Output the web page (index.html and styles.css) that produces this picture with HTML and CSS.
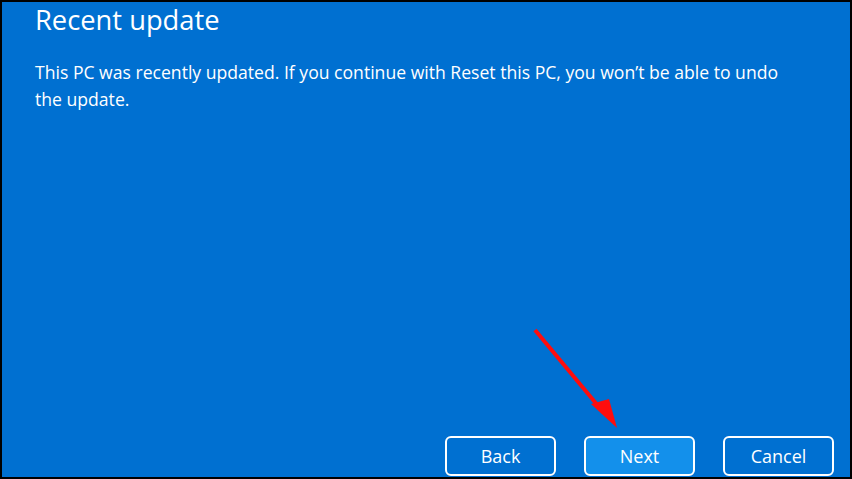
FILE: index.html
```html
<!DOCTYPE html>
<html>
<head>
<meta charset="utf-8">
<link rel="stylesheet" href="styles.css">
</head>
<body>
<div class="screen">
  <div class="content">
    <h1 class="title">Recent update</h1>
    <p class="desc">This PC was recently updated. If you continue with Reset this PC, you won’t be able to undo the update.</p>
  </div>
  <div class="actions">
    <button class="btn">Back</button>
    <button class="btn primary">Next</button>
    <button class="btn">Cancel</button>
  </div>
  <svg class="arrow" width="852" height="479" viewBox="0 0 852 479">
    <line x1="535" y1="330" x2="604" y2="413" stroke="#ff0d0d" stroke-width="4"/>
    <polygon points="617,428 591,404 609,399" fill="#ff0d0d"/>
  </svg>
</div>
</body>
</html>
```
FILE: styles.css
```css
html, body {
  margin: 0;
  padding: 0;
  background: #000;
}
.screen {
  position: relative;
  width: 848px;
  height: 475px;
  margin: 2px 2px 2px 2px;
  background: #0070d1;
  display: flex;
  flex-direction: column;
  justify-content: space-between;
  font-family: "Open Sans", "Noto Sans", sans-serif;
  color: #fff;
}
.content {
  padding: 1px 30px 0 33px;
}
.title {
  margin: 0;
  font-weight: 400;
  font-size: 27.3px;
  line-height: 33px;
}
.desc {
  margin: 23px 0 0;
  font-size: 17.6px;
  line-height: 27px;
  max-width: 768px;
}
.actions {
  display: flex;
  justify-content: flex-end;
  gap: 28px;
  padding: 0 16px 1px 0;
}
.btn {
  width: 111px;
  height: 40px;
  border: 2.5px solid #fff;
  border-radius: 6px;
  background: #0070d1;
  color: #fff;
  font-family: "Open Sans", "Noto Sans", sans-serif;
  font-size: 18px;
  padding: 0;
}
.btn.primary {
  background: #1390eb;
}
.arrow {
  position: absolute;
  left: -2px;
  top: -2px;
  pointer-events: none;
}
```
